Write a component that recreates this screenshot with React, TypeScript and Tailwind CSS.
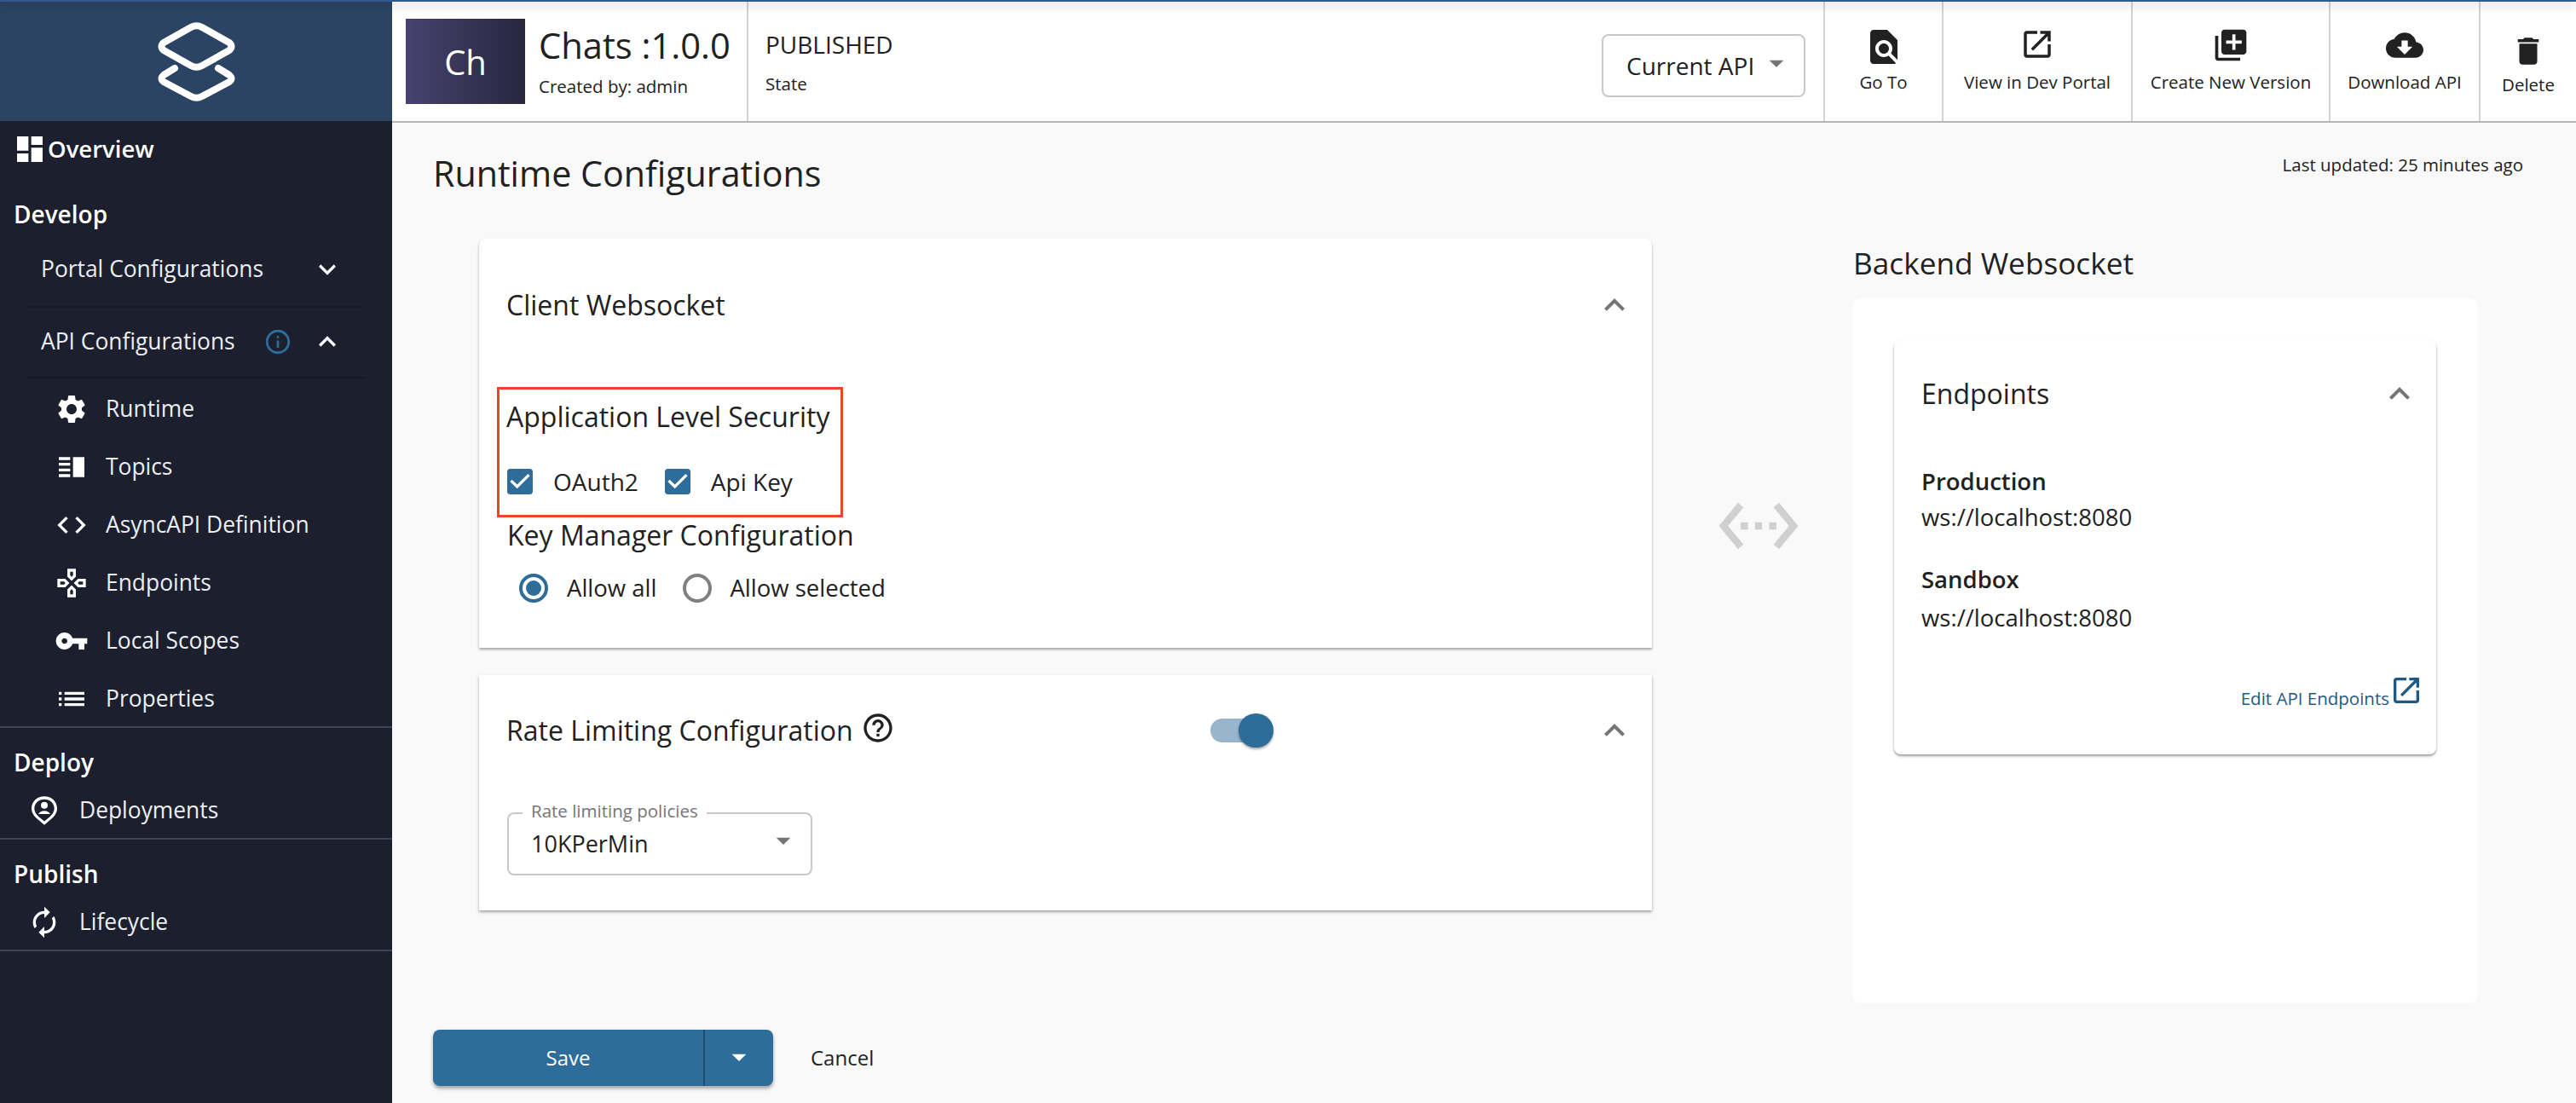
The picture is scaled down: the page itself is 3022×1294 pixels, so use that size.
import React from 'react';

const P = {
  dashboard: 'M3 13h8V3H3v10zm0 8h8v-6H3v6zm10 0h8V11h-8v10zm0-18v6h8V3h-8z',
  gear: 'M19.14 12.94c.04-.3.06-.61.06-.94 0-.32-.02-.64-.07-.94l2.03-1.58c.18-.14.23-.41.12-.61l-1.92-3.32c-.12-.22-.37-.29-.59-.22l-2.39.96c-.5-.38-1.03-.7-1.62-.94l-.36-2.54c-.04-.24-.24-.41-.48-.41h-3.84c-.24 0-.43.17-.47.41l-.36 2.54c-.59.24-1.13.57-1.62.94l-2.39-.96c-.22-.08-.47 0-.59.22L2.74 8.87c-.12.21-.08.47.12.61l2.03 1.58c-.05.3-.09.63-.09.94s.02.64.07.94l-2.03 1.58c-.18.14-.23.41-.12.61l1.92 3.32c.12.22.37.29.59.22l2.39-.96c.5.38 1.03.7 1.62.94l.36 2.54c.05.24.24.41.48.41h3.84c.24 0 .44-.17.47-.41l.36-2.54c.59-.24 1.13-.56 1.62-.94l2.39.96c.22.08.47 0 .59-.22l1.92-3.32c.12-.22.07-.47-.12-.61l-2.01-1.58zM12 15.6c-1.98 0-3.6-1.62-3.6-3.6s1.62-3.6 3.6-3.6 3.6 1.62 3.6 3.6-1.62 3.6-3.6 3.6z',
  topics: 'M3 15h8v-2H3v2zm0 4h8v-2H3v2zm0-8h8V9H3v2zm0-6v2h8V5H3zm10 0v14h8V5h-8z',
  code: 'M9.4 16.6L4.8 12l4.6-4.6L8 6l-6 6 6 6 1.4-1.4zm5.2 0l4.6-4.6-4.6-4.6L16 6l6 6-6 6-1.4-1.4z',
  games: 'M13 4v2.67l-1 1-1-1V4h2m7 7v2h-2.67l-1-1 1-1H20M6.67 11l1 1-1 1H4v-2h2.67M12 16.33l1 1V20h-2v-2.67l1-1M15 2H9v5.5l3 3 3-3V2zm7 7h-5.5l-3 3 3 3H22V9zM7.5 9H2v6h5.5l3-3-3-3zm4.5 4.5l-3 3V22h6v-5.5l-3-3z',
  key: 'M12.65 10C11.83 7.67 9.61 6 7 6c-3.31 0-6 2.69-6 6s2.69 6 6 6c2.61 0 4.83-1.67 5.65-4H17v4h4v-4h2v-4H12.65zM7 14c-1.1 0-2-.9-2-2s.9-2 2-2 2 .9 2 2-.9 2-2 2z',
  list: 'M3 13h2v-2H3v2zm0 4h2v-2H3v2zm0-8h2V7H3v2zm4 4h14v-2H7v2zm0 4h14v-2H7v2zM7 7v2h14V7H7z',
  sync: 'M12 4V1L8 5l4 4V6c3.31 0 6 2.69 6 6 0 1.01-.25 1.97-.7 2.8l1.46 1.46C19.54 15.03 20 13.57 20 12c0-4.42-3.58-8-8-8zm0 14c-3.31 0-6-2.69-6-6 0-1.01.25-1.97.7-2.8L5.24 7.74C4.46 8.97 4 10.43 4 12c0 4.42 3.58 8 8 8v3l4-4-4-4v3z',
  pin: 'M12 2C6.900 2 3 5.700 3 10.500c0 3.500 2.600 6.400 5.500 8.500L12 22l3.500-3c2.900-2.100 5.500-5 5.500-8.500C21 5.700 17.100 2 12 2zm0 2c3.900 0 7 2.800 7 6.500 0 2.800-2.100 5.100-4.600 7L12 19.500l-2.400-2C7.100 15.600 5 13.300 5 10.500 5 6.800 8.100 4 12 4zm0 1.800a2.400 2.400 0 1 0 0 4.800 2.400 2.400 0 0 0 0-4.800zM7.800 14.400h8.400c-.7-1.400-2.400-2.300-4.200-2.300s-3.500.9-4.200 2.300z',
  find: 'M20 19.59V8l-6-6H6c-1.1 0-1.99.9-1.99 2L4 20c0 1.1.89 2 1.99 2H18c.45 0 .85-.15 1.19-.4l-4.43-4.43c-.8.52-1.74.83-2.76.83-2.76 0-5-2.24-5-5s2.24-5 5-5 5 2.24 5 5c0 1.02-.31 1.96-.83 2.75L20 19.59zM9 13c0 1.66 1.34 3 3 3s3-1.34 3-3-1.34-3-3-3-3 1.34-3 3z',
  launch: 'M19 19H5V5h7V3H5c-1.11 0-2 .9-2 2v14c0 1.1.89 2 2 2h14c1.1 0 2-.9 2-2v-7h-2v7zM14 3v2h3.59l-9.83 9.83 1.41 1.41L19 6.41V10h2V3h-7z',
  library: 'M4 6H2v14c0 1.1.9 2 2 2h14v-2H4V6zm16-4H8c-1.1 0-2 .9-2 2v12c0 1.1.9 2 2 2h12c1.1 0 2-.9 2-2V4c0-1.1-.9-2-2-2zm-1 9h-4v4h-2v-4H9V9h4V5h2v4h4v2z',
  cloud: 'M19.35 10.04C18.67 6.59 15.64 4 12 4 9.11 4 6.6 5.64 5.35 8.04 2.34 8.36 0 10.91 0 14c0 3.31 2.69 6 6 6h13c2.76 0 5-2.24 5-5 0-2.64-2.05-4.78-4.65-4.96zM17 13l-5 5-5-5h3V9h4v4h3z',
  trash: 'M6 19c0 1.1.9 2 2 2h8c1.1 0 2-.9 2-2V7H6v12zM19 4h-3.5l-1-1h-5l-1 1H5v2h14V4z',
  help: 'M11 18h2v-2h-2v2zm1-16C6.48 2 2 6.48 2 12s4.48 10 10 10 10-4.48 10-10S17.52 2 12 2zm0 18c-4.41 0-8-3.59-8-8s3.59-8 8-8 8 3.59 8 8-3.59 8-8 8zm0-14c-2.21 0-4 1.79-4 4h2c0-1.1.9-2 2-2s2 .9 2 2c0 2-3 1.75-3 5h2c0-2.25 3-2.5 3-5 0-2.21-1.79-4-4-4z',
  info: 'M11 7h2v2h-2zm0 4h2v6h-2zm1-9C6.48 2 2 6.48 2 12s4.48 10 10 10 10-4.48 10-10S17.52 2 12 2zm0 18c-4.41 0-8-3.59-8-8s3.59-8 8-8 8 3.59 8 8-3.59 8-8 8z',
  more: 'M16.59 8.59L12 13.17 7.41 8.59 6 10l6 6 6-6z',
  less: 'M12 8l-6 6 1.41 1.41L12 10.83l4.59 4.58L18 14z',
  check: 'M19 3H5c-1.11 0-2 .9-2 2v14c0 1.1.89 2 2 2h14c1.11 0 2-.9 2-2V5c0-1.1-.89-2-2-2zm-9 14l-5-5 1.41-1.41L10 14.17l7.59-7.59L19 8l-9 9z',
  arrow: 'M7 10l5 5 5-5z',
  ethernet: 'M7.77 6.76L6.23 5.48.82 12l5.41 6.52 1.54-1.28L3.42 12l4.35-5.24zM7 13h2v-2H7v2zm10-2h-2v2h2v-2zm-6 2h2v-2h-2v2zm6.77-7.52l-1.54 1.28L20.58 12l-4.35 5.24 1.54 1.28L23.18 12l-5.41-6.52z',
};

function Icon({ d, className }: { d: string; className?: string }) {
  return (
    <svg viewBox="0 0 24 24" fill="currentColor" className={className}>
      <path d={d} />
    </svg>
  );
}

const subItems = [
  { label: 'Runtime', icon: P.gear },
  { label: 'Topics', icon: P.topics },
  { label: 'AsyncAPI Definition', icon: P.code },
  { label: 'Endpoints', icon: P.games },
  { label: 'Local Scopes', icon: P.key },
  { label: 'Properties', icon: P.list },
];

const actions = [
  { label: 'Go To', icon: P.find, width: 'w-[139px]', size: 'w-12 h-12', pad: 'pt-[29px]', gap: 'mt-[3px]' },
  { label: 'View in Dev Portal', icon: P.launch, width: 'w-[222px]', size: 'w-[42px] h-[42px]', pad: 'pt-[29px]', gap: 'mt-[9px]' },
  { label: 'Create New Version', icon: P.library, width: 'w-[232px]', size: 'w-[44px] h-[44px]', pad: 'pt-[29px]', gap: 'mt-[7px]' },
  { label: 'Download API', icon: P.cloud, width: 'w-[176px]', size: 'w-[44px] h-[44px]', pad: 'pt-[29px]', gap: 'mt-[7px]' },
  { label: 'Delete', icon: P.trash, width: 'w-[114px]', size: 'w-[42px] h-[42px]', pad: 'pt-[37px]', gap: 'mt-[4px]' },
];

function Logo() {
  return (
    <svg viewBox="0 0 93 93" className="w-[93px] h-[93px]" fill="none" stroke="white" strokeWidth="8" strokeLinecap="round" strokeLinejoin="round">
      <path d="M40 6 Q46.500 2.500 53 6 L85 24 Q90 28.500 85 33 L53 51 Q46.500 54.500 40 51 L8 33 Q3 28.500 8 24 Z" />
      <path d="M21 54 L8 62 Q3 66 8 70 L40 87 Q46.500 90.500 53 87 L85 70 Q90 66 85 62 L72 54" />
    </svg>
  );
}

function Sidebar() {
  return (
    <aside className="w-[460px] shrink-0 flex flex-col bg-[#1b1f2e] text-[#eceef2]">
      <div className="h-[140px] bg-[#2c4464] flex items-center justify-center">
        <Logo />
      </div>
      <div className="h-[66px] flex items-center pl-[16px] text-[27.5px] font-semibold text-white">
        <Icon d={P.dashboard} className="w-10 h-10 -ml-[1px] text-white shrink-0" />
        <span className="ml-[1px]">Overview</span>
      </div>
      <div className="mt-2 h-[70px] flex items-center pl-[16px] text-[28px] font-semibold text-white">Develop</div>
      <div className="h-[75px] mx-[32px] border-b-2 border-[#171a26] pb-[13px] flex items-center pl-[16px] pr-[24px] justify-between text-[26.4px]">
        <span>Portal Configurations</span>
        <Icon d={P.more} className="w-10 h-10 text-white" />
      </div>
      <div className="h-[83px] mx-[32px] pb-[2px] border-b-2 border-[#171a26] flex items-center pl-[16px] pr-[24px] text-[26.4px]">
        <span>API Configurations</span>
        <Icon d={P.info} className="w-[34px] h-[34px] ml-[33px] text-[#2e6c99]" />
        <Icon d={P.less} className="w-10 h-10 ml-auto text-white" />
      </div>
      {subItems.map((item) => (
        <div key={item.label} className="h-[68px] pt-[3px] flex items-center pl-[64px] text-[26.4px]">
          <span className="w-[40px] flex justify-center">
            <Icon d={item.icon} className="w-10 h-10 text-white" />
          </span>
          <span className="ml-[20px]">{item.label}</span>
        </div>
      ))}
      <div className="h-[2px] bg-[#3d4354]" />
      <div className="mt-[10px] h-[60px] flex items-center pl-[16px] text-[28px] font-semibold text-white">Deploy</div>
      <div className="h-[50px] mb-[9px] pt-[3px] flex items-center pl-[32px] text-[26.4px]">
        <Icon d={P.pin} className="w-10 h-10 text-white" />
        <span className="ml-[21px]">Deployments</span>
      </div>
      <div className="h-[2px] bg-[#3d4354]" />
      <div className="mt-[10px] h-[60px] flex items-center pl-[16px] text-[28px] font-semibold text-white">Publish</div>
      <div className="h-[50px] mb-[9px] pt-[3px] flex items-center pl-[32px] text-[26.4px]">
        <Icon d={P.sync} className="w-10 h-10 text-white -scale-x-100" />
        <span className="ml-[21px]">Lifecycle</span>
      </div>
      <div className="h-[2px] bg-[#3d4354]" />
    </aside>
  );
}

function Header() {
  return (
    <header className="h-[142px] shrink-0 bg-white border-b-2 border-[#b5b5b5] flex">
      <div className="w-[418px] border-r-2 border-[#d4d4d4] flex items-center pl-[16px]">
        <div className="w-[140px] h-[100px] bg-gradient-to-r from-[#47426f] to-[#27273f] text-white text-[40px] flex items-center justify-center pt-[2px]">Ch</div>
        <div className="ml-[16px] flex flex-col">
          <span className="text-[41.7px] leading-[50px] text-[#212121]">Chats :1.0.0</span>
          <span className="text-[20.5px] leading-[30px] mt-[8px] text-[#212121]">Created by: admin</span>
        </div>
      </div>
      <div className="flex flex-col pl-[20px]">
        <span className="mt-[30px] text-[28px] leading-[40px] text-[#212121]">PUBLISHED</span>
        <span className="mt-[11px] text-[20.5px] leading-[30px] text-[#212121]">State</span>
      </div>
      <div className="ml-auto mr-[21px] mt-[38px] w-[239px] h-[74px] rounded-lg border-2 border-[#c8c8c8] flex items-center pl-[27px] text-[28px] text-[#212121]">
        <span>Current API</span>
        <Icon d={P.arrow} className="w-10 h-10 ml-auto mr-[12px] -mt-[6px] text-[#757575]" />
      </div>
      {actions.map((a) => (
        <div key={a.label} className={`${a.width} shrink-0 border-l-2 border-[#d4d4d4] flex flex-col items-center ${a.pad}`}>
          <Icon d={a.icon} className={`${a.size} text-[#212121]`} />
          <span className={`${a.gap} text-[20.5px] leading-[28px] text-[#212121] whitespace-nowrap`}>{a.label}</span>
        </div>
      ))}
    </header>
  );
}

function Radio({ on, label, gap }: { on: boolean; label: string; gap: string }) {
  return (
    <div className="flex items-center">
      <span className={`w-[34px] h-[34px] rounded-full border-[4px] flex items-center justify-center ${on ? 'border-[#2e6c99]' : 'border-[#808080]'}`}>
        {on && <span className="w-[18px] h-[18px] rounded-full bg-[#2e6c99]" />}
      </span>
      <span className={`${gap} text-[27.5px] text-[#212121]`}>{label}</span>
    </div>
  );
}

function Check({ label }: { label: string }) {
  return (
    <div className="flex items-center">
      <Icon d={P.check} className="w-10 h-10 text-[#2e6c99]" />
      <span className="ml-[19px] text-[28px] text-[#212121]">{label}</span>
    </div>
  );
}

function LeftColumn() {
  return (
    <div className="w-[1376px] shrink-0 flex flex-col gap-[32px]">
      <section className="h-[480px] bg-white rounded-t-lg shadow-[0_2px_3px_rgba(0,0,0,0.35)]">
        <div className="h-[152px] pt-[3px] flex items-center justify-between pl-[32px] pr-[20px]">
          <span className="text-[32px] text-[#212121]">Client Websocket</span>
          <Icon d={P.less} className="w-12 h-12 text-[#757575]" />
        </div>
        <div className="mt-[22px] ml-[21px] w-[406px] h-[153px] border-[3px] border-[#e8452c] pt-[10px] pl-[4px]">
          <div className="pl-[4px] h-[44px] leading-[44px] text-[32px] text-[#212121]">Application Level Security</div>
          <div className="mt-[33px] flex gap-[26px]">
            <Check label="OAuth2" />
            <Check label="Api Key" />
          </div>
        </div>
        <div className="ml-[33px] h-[42px] leading-[42px] text-[32px] text-[#212121]">Key Manager Configuration</div>
        <div className="mt-[20px] ml-[47px] flex gap-[31px]">
          <Radio on label="Allow all" gap="ml-[22px]" />
          <Radio on={false} label="Allow selected" gap="ml-[21px]" />
        </div>
      </section>
      <section className="h-[276px] bg-white shadow-[0_2px_3px_rgba(0,0,0,0.35)]">
        <div className="h-[130px] flex items-center pl-[32px] pr-[20px]">
          <div className="w-[826px] flex items-center">
            <span className="text-[32px] text-[#212121]">Rate Limiting Configuration</span>
            <Icon d={P.help} className="w-10 h-10 ml-[9px] -mt-[6px] text-[#212121]" />
          </div>
          <div className="relative w-[74px] h-[28px] rounded-full">
            <div className="w-[50px] h-[28px] rounded-l-full bg-[#97b5cc]" />
            <div className="absolute left-[33px] -top-[6px] w-[41px] h-[40px] rounded-full bg-[#2e6c99] shadow-[0_2px_3px_rgba(0,0,0,0.35)]" />
          </div>
          <Icon d={P.less} className="w-12 h-12 ml-auto text-[#757575]" />
        </div>
        <div className="relative mt-[31px] ml-[33px] w-[358px] h-[74px] rounded-lg border-2 border-[#c8c8c8] flex items-center pl-[26px] text-[27px] text-[#212121]">
          <span>10KPerMin</span>
          <Icon d={P.arrow} className="w-10 h-10 ml-auto mr-[12px] -mt-[8px] text-[#757575]" />
          <span className="absolute left-[16px] -top-[18px] bg-white px-[10px] text-[20.5px] leading-[28px] text-[#757575]">Rate limiting policies</span>
        </div>
      </section>
    </div>
  );
}

function RightColumn() {
  return (
    <div className="w-[732px] shrink-0">
      <h2 className="h-[56px] leading-[56px] text-[35.2px] text-[#212121]">Backend Websocket</h2>
      <div className="mt-[14px] h-[827px] bg-white rounded-lg pt-[49px] px-[48px]">
        <div className="h-[486px] rounded-lg bg-white shadow-[0_2px_3px_rgba(0,0,0,0.4)]">
          <div className="h-[126px] flex items-center justify-between pl-[32px] pr-[21px]">
            <span className="text-[32px] text-[#212121]">Endpoints</span>
            <Icon d={P.less} className="w-12 h-12 -mr-[2px] text-[#757575]" />
          </div>
          <div className="pl-[32px] text-[27.5px] text-[#212121]">
            <div className="mt-[22px] h-[36px] leading-[36px] font-semibold">Production</div>
            <div className="mt-[6px] h-[36px] leading-[36px]">ws://localhost:8080</div>
            <div className="mt-[37px] h-[36px] leading-[36px] font-semibold">Sandbox</div>
            <div className="mt-[9px] h-[36px] leading-[36px]">ws://localhost:8080</div>
          </div>
          <div className="mt-[61px] pr-[15px] flex justify-end items-start text-[20.5px] leading-[30px] text-[#1f5a85]">
            <span>Edit API Endpoints</span>
            <Icon d={P.launch} className="w-10 h-10 -mt-[14px] text-[#1f5a85]" />
          </div>
        </div>
      </div>
    </div>
  );
}

export default function App() {
  return (
    <div className="w-[3022px] h-[1294px] overflow-hidden flex flex-col bg-[#f9f9f9] font-['Open_Sans',sans-serif]">
      <div className="h-[2px] shrink-0 bg-[#2f5b92] relative z-10 shadow-[0_3px_12px_rgba(0,0,0,0.45)]" />
      <div className="flex flex-1 min-h-0">
        <Sidebar />
        <div className="flex-1 flex flex-col min-w-0">
          <Header />
          <main className="flex-1 flex flex-col">
            <div className="h-[136px] flex items-start justify-between pl-[48px] pr-[62px]">
              <h1 className="mt-[32px] h-[54px] leading-[54px] text-[41.2px] text-[#212121]">Runtime Configurations</h1>
              <span className="mt-[34px] text-[20.5px] leading-[30px] text-[#212121]">Last updated: 25 minutes ago</span>
            </div>
            <div className="flex pl-[102px]">
              <LeftColumn />
              <div className="w-[236px] shrink-0 flex justify-center pt-[287px] pl-[14px]">
                <Icon d={P.ethernet} className="w-[100px] h-[100px] text-[#d0d0d0]" />
              </div>
              <RightColumn />
            </div>
            <div className="mt-[31px] pl-[48px] flex items-center">
              <div className="w-[399px] h-[66px] rounded-lg bg-[#2e6c99] text-white text-[24px] flex shadow-[0_3px_4px_rgba(0,0,0,0.35)]">
                <span className="w-[319px] flex items-center justify-center border-r-2 border-[#1f4e73]">Save</span>
                <span className="flex-1 flex items-center justify-center">
                  <Icon d={P.arrow} className="w-10 h-10 -mt-[2px]" />
                </span>
              </div>
              <span className="ml-[44px] text-[24px] text-[#212121]">Cancel</span>
            </div>
          </main>
        </div>
      </div>
    </div>
  );
}
